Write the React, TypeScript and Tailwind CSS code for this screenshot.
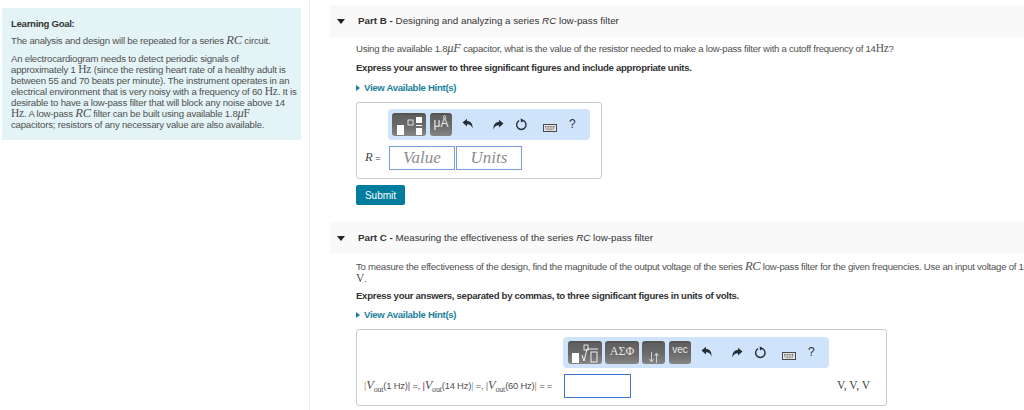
import React from "react";

const sans = "font-['Liberation_Sans',Arial,sans-serif]";
const tex = "font-['Liberation_Serif','Times_New_Roman',serif]";

function MathIt({ children }: { children: React.ReactNode }) {
  return <span className={`${tex} italic text-[12.5px] inline-block leading-[8px]`}>{children}</span>;
}

function MathRm({ children }: { children: React.ReactNode }) {
  return <span className={`${tex} text-[11.5px] inline-block leading-[8px]`}>{children}</span>;
}

function TemplateBtn({ w, children }: { w: string; children?: React.ReactNode }) {
  return (
    <div className={`${w} h-[23px] rounded-[3px] border-t-2 border-[#555] bg-gradient-to-b from-[#5f5f5f] via-[#6a6a6a] to-[#858585] flex items-center justify-center overflow-hidden`}>
      {children}
    </div>
  );
}

function UndoIcon({ flip }: { flip?: boolean }) {
  return (
    <svg width="12" height="12" viewBox="0 0 12 12" className={flip ? "-scale-x-100" : ""}>
      <path d="M0.5 4.5 L5 0.8 V3 C8.5 3 11 5.5 10.5 10.5 C9.5 7.5 8 6.3 5 6.3 V8.5 Z" fill="#26303a" />
    </svg>
  );
}

function ResetIcon() {
  return (
    <svg width="13" height="13" viewBox="0 0 13 13" fill="none">
      <path d="M8.5 2.6 A4.7 4.7 0 1 1 4.2 2.6" stroke="#26303a" strokeWidth="1.4" />
      <path d="M5.6 0.2 L9.5 2.4 L6 4.6 Z" fill="#26303a" />
    </svg>
  );
}

function KeyboardIcon() {
  return (
    <svg width="14" height="8" viewBox="0 0 14 8" fill="none">
      <rect x="0.5" y="0.5" width="13" height="7" fill="#e8e8e8" stroke="#4a4a4a" />
      <path d="M2 2.5 H12 M2 4 H12 M3.5 5.7 H10.5" stroke="#555" strokeWidth="0.9" strokeDasharray="1 0.6" />
    </svg>
  );
}

function HistoryTools() {
  return (
    <>
      <div className="ml-[10px] -mt-[1px] flex"><UndoIcon /></div>
      <div className="ml-[18px] mt-[1px] flex"><UndoIcon flip /></div>
      <div className="ml-[11px] -mt-[1px] flex"><ResetIcon /></div>
      <div className="ml-[15px] mt-[7px] flex"><KeyboardIcon /></div>
      <span className={`ml-[12px] -mt-[2px] text-[12px] text-[#333] ${sans}`}>?</span>
    </>
  );
}

function Hint() {
  return (
    <div className="flex items-center text-[#1b7f9c] font-bold text-[9.6px] tracking-[-0.3px] leading-[12px]">
      <svg width="4" height="6" viewBox="0 0 4 6" className="mr-[4px]"><path d="M0 0 L4 3 L0 6 Z" fill="#1b7f9c" /></svg>
      View Available Hint(s)
    </div>
  );
}

function PartHeader({ letter, children }: { letter: string; children: React.ReactNode }) {
  return (
    <div className="h-[32px] bg-[#f9f9f9] flex items-center text-[9.8px] text-[#333]">
      <svg width="8" height="5" viewBox="0 0 8 5" className="ml-[7px] mr-[13px]"><path d="M0 0 H8 L4 5 Z" fill="#222" /></svg>
      <span className="font-bold">Part {letter} -&nbsp;</span>
      <span>{children}</span>
    </div>
  );
}

function Vout({ hz, open, close }: { hz: string; open: string; close: string }) {
  return (
    <>
      <span className={open}>|</span>
      <MathIt>V</MathIt>
      <span className={`${tex} text-[8px] align-sub leading-none`}>out</span>
      ({hz} Hz)
      <span className={close}>|</span>
    </>
  );
}

export default function App() {
  return (
    <div className={`w-[1024px] h-[410px] overflow-hidden flex bg-white text-[#505050] ${sans}`}>
      {/* Learning goal */}
      <aside className="w-[310px] shrink-0 h-full border-r border-[#e9edf5] pl-[2px] pt-[8px]">
        <div className="w-[299px] h-[132px] bg-[#e4f4f6] pl-[9px] pt-[10px] text-[9.6px] tracking-[-0.2px] leading-[11px] text-[#505050]">
          <p className="font-bold text-[9.6px] tracking-[-0.3px] text-[#333] mb-[6px]">Learning Goal:</p>
          <p className="mb-[7px] whitespace-nowrap">The analysis and design will be repeated for a series <MathIt>RC</MathIt> circuit.</p>
          <p className="whitespace-nowrap">
            An electrocardiogram needs to detect periodic signals of<br />
            approximately 1 <MathRm>Hz</MathRm> (since the resting heart rate of a healthy adult is<br />
            between 55 and 70 beats per minute). The instrument operates in an<br />
            electrical environment that is very noisy with a frequency of 60 <MathRm>Hz</MathRm>. It is<br />
            desirable to have a low-pass filter that will block any noise above 14<br />
            <MathRm>Hz</MathRm>. A low-pass <MathIt>RC</MathIt> filter can be built using available 1.8<MathIt>μ</MathIt><MathRm>F</MathRm><br />
            capacitors; resistors of any necessary value are also available.
          </p>
        </div>
      </aside>

      <main className="flex-1 min-w-0 pl-[20px] pt-[5px] overflow-hidden">
        {/* Part B */}
        <PartHeader letter="B">Designing and analyzing a series <i>RC</i> low-pass filter</PartHeader>
        <div className="pl-[26px]">
          <p className="mt-[5px] text-[9.6px] tracking-[-0.25px] leading-[14px] whitespace-nowrap">
            Using the available 1.8<MathIt>μF</MathIt> capacitor, what is the value of the resistor needed to make a low-pass filter with a cutoff frequency of 14<MathRm>Hz</MathRm>?
          </p>
          <p className="mt-[5px] text-[9.6px] tracking-[-0.3px] leading-[14px] font-bold text-[#333]">Express your answer to three significant figures and include appropriate units.</p>
          <div className="mt-[7px]"><Hint /></div>

          <div className="mt-[8px] w-[246px] h-[77px] border border-[#ccc] rounded-[3px] pl-[8px] pt-[6px]">
            <div className="ml-[23px] w-[202px] h-[31px] bg-[#cfe4fb] rounded-[4px] flex items-center pl-[4px]">
              <TemplateBtn w="w-[34px]">
                <svg width="26" height="19" viewBox="0 0 26 19" fill="none">
                  <rect x="1" y="9" width="7" height="10" fill="#fff" />
                  <rect x="12" y="4" width="5" height="5" stroke="#fff" strokeWidth="0.8" />
                  <rect x="20" y="1" width="6" height="6" fill="#fff" />
                  <rect x="20" y="9" width="6" height="1" fill="#fff" />
                  <rect x="20" y="12" width="6" height="7" fill="#fff" />
                </svg>
              </TemplateBtn>
              <div className="w-[4px]" />
              <TemplateBtn w="w-[22px]">
                <span className={`text-[12px] text-[#e8e8e8] ${sans} -mt-[6px]`}>μÅ</span>
              </TemplateBtn>
              <HistoryTools />
            </div>
            <div className="mt-[6px] flex items-center">
              <span className="w-[24px] text-[9.6px] text-[#444]"><MathIt>R</MathIt> =</span>
              <div className={`w-[66px] h-[24px] border border-[#7a9bdc] flex items-center justify-center text-[17px] italic text-[#8d8d8d] ${tex}`}>Value</div>
              <div className={`ml-px w-[66px] h-[24px] border border-[#7a9bdc] flex items-center justify-center text-[17px] italic text-[#8d8d8d] ${tex}`}>Units</div>
            </div>
          </div>

          <div className="mt-[6px] w-[49px] h-[20px] bg-[#007c9e] rounded-[2px] text-white text-[10px] flex items-center justify-center">Submit</div>
        </div>

        {/* Part C */}
        <div className="mt-[17px]">
          <PartHeader letter="C">Measuring the effectiveness of the series <i>RC</i> low-pass filter</PartHeader>
        </div>
        <div className="pl-[26px]">
          <p className="mt-[8px] text-[9.6px] tracking-[-0.25px] leading-[10px] whitespace-nowrap">
            To measure the effectiveness of the design, find the magnitude of the output voltage of the series <MathIt>RC</MathIt> low-pass filter for the given frequencies. Use an input voltage of 1
          </p>
          <p className="mt-[2px] text-[9.6px] leading-[10px]"><MathRm>V</MathRm>.</p>
          <p className="mt-[5px] text-[9.6px] tracking-[-0.3px] leading-[14px] font-bold text-[#333]">Express your answers, separated by commas, to three significant figures in units of volts.</p>
          <div className="mt-[6px]"><Hint /></div>

          <div className="mt-[8px] w-[531px] h-[77px] border border-[#ccc] rounded-[3px] pl-[7px] pt-[7px]">
            <div className="ml-[199px] w-[266px] h-[31px] bg-[#cfe4fb] rounded-[4px] flex items-center pl-[5px]">
              <TemplateBtn w="w-[34px]">
                <svg width="28" height="19" viewBox="0 0 28 19" fill="none">
                  <rect x="1" y="9" width="7" height="10" fill="#fff" />
                  <rect x="13" y="1" width="4" height="5" stroke="#fff" strokeWidth="0.8" />
                  <path d="M11 11 L13 17 L16 5 H27" stroke="#fff" strokeWidth="0.9" />
                  <rect x="20" y="8" width="6" height="10" stroke="#fff" strokeWidth="0.9" />
                </svg>
              </TemplateBtn>
              <div className="w-[3px]" />
              <TemplateBtn w="w-[34px]">
                <span className={`text-[12px] text-[#e8e8e8] ${tex} -mt-[6px]`}>ΑΣΦ</span>
              </TemplateBtn>
              <div className="w-[3px]" />
              <TemplateBtn w="w-[23px]">
                <svg width="10" height="11" viewBox="0 0 10 11" fill="none" className="mt-[7px]">
                  <path d="M2.5 0 V9 M0.5 7 L2.5 10 L4.5 7 M7.5 11 V2 M5.5 4 L7.5 1 L9.5 4" stroke="#d8d8d8" strokeWidth="0.9" />
                </svg>
              </TemplateBtn>
              <div className="w-[4px]" />
              <TemplateBtn w="w-[22px]">
                <span className="text-[10px] text-[#e8e8e8] -mt-[9px]">vec</span>
              </TemplateBtn>
              <HistoryTools />
            </div>
            <div className="mt-[6px] flex items-center">
              <span className="w-[200px] text-[9.4px] tracking-[-0.2px] whitespace-nowrap">
                <Vout hz="1" open="text-[#c69a4e]" close="text-[#7a2c6e]" /> =, <Vout hz="14" open="text-[#7a2c6e]" close="text-[#5bb5e0]" /> =, <Vout hz="60" open="text-[#5a7fa0]" close="text-[#c98a2e]" /> = =
              </span>
              <div className="w-[67px] h-[24px] border border-[#3f74cf]" />
              <span className={`ml-[206px] text-[11.5px] text-[#444] ${tex}`}>V, V, V</span>
            </div>
          </div>
        </div>
      </main>
    </div>
  );
}
